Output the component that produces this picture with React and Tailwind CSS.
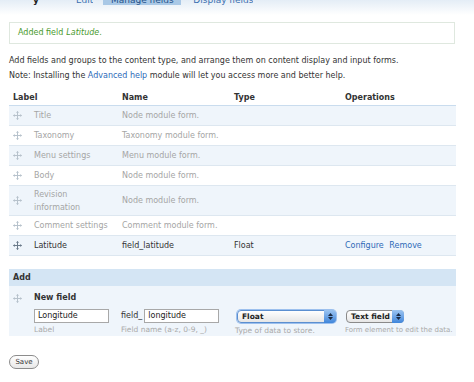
import React from "react";

function Handle({ dark }) {
  const c = dark ? "#6a7a8a" : "#b7c2cc";
  return (
    <svg width="9" height="9" viewBox="0 0 9 9" className="shrink-0">
      <path d="M4.5 0.5 V8.5 M0.5 4.5 H8.5" stroke={c} strokeWidth="1" />
      <path d="M4.5 0 L3 1.8 H6 Z M4.5 9 L3 7.2 H6 Z M0 4.5 L1.8 3 V6 Z M9 4.5 L7.2 3 V6 Z" fill={c} />
    </svg>
  );
}

const rows = [
  { label: "Title", name: "Node module form." },
  { label: "Taxonomy", name: "Taxonomy module form." },
  { label: "Menu settings", name: "Menu module form." },
  { label: "Body", name: "Node module form." },
  { label: ["Revision", "information"], name: "Node module form." },
  { label: "Comment settings", name: "Comment module form." },
];

function SelectBox({ value, width, focus }) {
  return (
    <div
      className={`relative flex h-[13px] items-center rounded-[4px] border bg-gradient-to-b from-white to-[#e6e6e6] pl-[4px] ${
        focus ? "border-[#5c8fd0] shadow-[0_0_0_1px_#9cc0ee]" : "border-[#8a8a8a]"
      }`}
      style={{ width }}
    >
      <span className="text-[7.5px] font-bold leading-none text-[#222]">{value}</span>
      <div className="absolute right-[-1px] top-[-1px] flex h-[13px] w-[12px] flex-col items-center justify-center gap-[1px] rounded-r-[4px] bg-gradient-to-b from-[#9cc4f0] to-[#3f86db]">
        <svg width="5" height="3" viewBox="0 0 5 3"><path d="M2.5 0 L5 3 H0 Z" fill="#1a2a44" /></svg>
        <svg width="5" height="3" viewBox="0 0 5 3"><path d="M0 0 H5 L2.5 3 Z" fill="#1a2a44" /></svg>
      </div>
    </div>
  );
}

export default function App() {
  return (
    <div
      className="relative h-[382px] w-[474px] overflow-hidden bg-white text-[8px] text-[#494949]"
      style={{ fontFamily: "'DejaVu Sans', Verdana, sans-serif" }}
    >
      {/* top tabs strip */}
      <div className="h-[15px] bg-gradient-to-b from-[#e4edf6] to-white">
        <div className="flex h-[5px] items-end overflow-hidden text-[9px] leading-[9px]">
          <span className="ml-[33px] h-[5px] overflow-hidden font-bold text-[#222]"><span className="relative top-[-4px] block">y</span></span>
          <span className="ml-[37px] h-[5px] overflow-hidden text-[#3a6fb0]"><span className="relative top-[-4px] block">Edit</span></span>
          <span className="ml-[10px] h-[5px] w-[78px] overflow-hidden bg-[#a9c8e6] text-center text-[#24528a]"><span className="relative top-[-4px] block">Manage fields</span></span>
          <span className="ml-[12px] h-[5px] overflow-hidden text-[#3a6fb0]"><span className="relative top-[-4px] block">Display fields</span></span>
        </div>
      </div>

      <div className="px-[9px] pt-[7px]">
        {/* status */}
        <div className="flex h-[22px] w-[446px] items-center border border-[#dfe8df] bg-white pl-[8px] text-[#4a9a2e]">
          Added field <i className="ml-[3px]">Latitude</i>.
        </div>

        <p className="mt-[9px] leading-[15px] text-[#333]">
          Add fields and groups to the content type, and arrange them on content display and input forms.
        </p>
        <p className="leading-[15px] text-[#333]">
          Note: Installing the <span className="text-[#2e6ab8]">Advanced help</span> module will let you access more and better help.
        </p>

        {/* table */}
        <div className="mt-[7px] w-[447px]">
          <div className="grid h-[16px] grid-cols-[113px_112px_111px_1fr] items-center border-b border-[#c9dcee] font-bold text-[#333]">
            <span className="pl-[4px]">Label</span>
            <span>Name</span>
            <span>Type</span>
            <span>Operations</span>
          </div>
          {rows.map((r, i) => (
            <div
              key={i}
              className={`grid grid-cols-[113px_112px_111px_1fr] items-center border-b border-[#dde7f0] text-[#a5a5a5] ${
                Array.isArray(r.label) ? "h-[30px]" : "h-[20px]"
              } ${i % 2 === 0 ? "bg-[#eff5fb]" : "bg-white"}`}
            >
              <div className="flex items-center">
                <span className="ml-[4px] mr-[12px]"><Handle /></span>
                <span className="leading-[13px]">
                  {Array.isArray(r.label) ? (
                    <>
                      {r.label[0]}
                      <br />
                      {r.label[1]}
                    </>
                  ) : (
                    r.label
                  )}
                </span>
              </div>
              <span>{r.name}</span>
              <span />
              <span />
            </div>
          ))}
          <div className="grid h-[20px] grid-cols-[113px_112px_111px_1fr] items-center border-b border-[#dde7f0] bg-[#eff5fb] text-[#333]">
            <div className="flex items-center">
              <span className="ml-[4px] mr-[12px]"><Handle dark /></span>
              <span>Latitude</span>
            </div>
            <span>field_latitude</span>
            <span>Float</span>
            <span className="text-[#2e6ab8]">
              Configure <span className="ml-[3px]">Remove</span>
            </span>
          </div>

          {/* Add */}
          <div className="mt-[13px] flex h-[17px] items-center bg-[#d4e5f4] pl-[4px] font-bold text-[#333]">Add</div>
          <div className="h-[50px] bg-[#eff5fb] pt-[6px]">
            <div className="flex items-center">
              <span className="ml-[4px] mr-[12px]"><Handle /></span>
              <span className="font-bold text-[#333]">New field</span>
            </div>
            <div className="mt-[5px] flex">
              <div className="ml-[25px] w-[87px]">
                <div className="flex h-[14px] w-[75px] items-center border border-[#a8a8a8] bg-white pl-[3px] text-[#222]">Longitude</div>
                <div className="mt-[1px] text-[7.5px] text-[#aaa]">Label</div>
              </div>
              <div className="w-[114px]">
                <div className="flex items-center">
                  <span className="text-[#333]">field_</span>
                  <div className="ml-[2px] flex h-[14px] w-[75px] items-center border border-[#a8a8a8] bg-white pl-[3px] text-[#222]">longitude</div>
                </div>
                <div className="mt-[1px] text-[7.5px] text-[#aaa]">Field name (a-z, 0-9, _)</div>
              </div>
              <div className="w-[110px]">
                <div className="ml-[2px] pt-[1px]"><SelectBox value="Float" width={99} focus /></div>
                <div className="mt-[2px] text-[7.5px] text-[#aaa]">Type of data to store.</div>
              </div>
              <div>
                <div className="ml-[1px] pt-[1px]"><SelectBox value="Text field" width={58} /></div>
                <div className="mt-[2px] text-[7px] text-[#aaa]">Form element to edit the data.</div>
              </div>
            </div>
          </div>
        </div>

        <button className="mt-[19px] flex h-[14px] w-[30px] items-center justify-center rounded-full border border-[#8c8c8c] bg-gradient-to-b from-white to-[#e8e8e8] text-[7px] text-[#333]">
          Save
        </button>
      </div>
    </div>
  );
}
